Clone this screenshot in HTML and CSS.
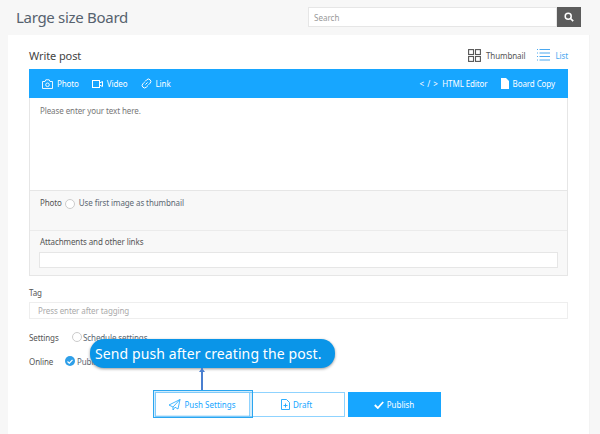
FILE: index.html
```html
<!DOCTYPE html>
<html lang="en">
<head>
<meta charset="utf-8">
<title>Large size Board</title>
<link rel="stylesheet" href="styles.css">
</head>
<body>
<header class="top">
  <h1 class="title">Large size Board</h1>
  <div class="search">
    <input class="search-input" placeholder="Search">
    <button class="search-btn" aria-label="Search">
      <svg width="10" height="10" viewBox="0 0 10 10"><circle cx="4.200" cy="4.200" r="3" fill="none" stroke="#fff" stroke-width="1.500"/><path d="M6.500 6.500L9.200 9.200" stroke="#fff" stroke-width="1.700"/></svg>
    </button>
  </div>
</header>
<main class="card">
  <div class="card-head">
    <h2 class="card-title">Write post</h2>
    <div class="views">
      <span class="view">
        <svg width="13" height="13" viewBox="0 0 13 13" fill="none" stroke="#555" stroke-width="1.100"><rect x=".6" y=".6" width="4.900" height="4.900"/><rect x="7.500" y=".6" width="4.900" height="4.900"/><rect x=".6" y="7.500" width="4.900" height="4.900"/><rect x="7.500" y="7.500" width="4.900" height="4.900"/></svg>
        Thumbnail
      </span>
      <span class="view view-on">
        <svg width="13" height="12" viewBox="0 0 13 12" stroke="#4aa8f0" stroke-width="1"><path d="M0 .5h1M2.500 .5H13M0 4h1M2.500 4H13M0 7.500h1M2.500 7.500H13M0 11h1M2.500 11H13"/></svg>
        List
      </span>
    </div>
  </div>
  <section class="editor">
    <div class="toolbar">
      <div class="tools">
        <span class="tool"><svg width="11" height="10" viewBox="0 0 11 10" fill="none" stroke="#fff" stroke-width=".9"><path d="M.5 2.500h2.500l.8-1.700h3.400l.8 1.700h2.500v7h-10z"/><circle cx="5.500" cy="5.800" r="1.800"/></svg>Photo</span>
        <span class="tool"><svg width="11" height="8" viewBox="0 0 11 8" fill="none" stroke="#fff" stroke-width="1"><rect x=".5" y=".5" width="7" height="7"/><path d="M7.500 3l3-1.500v5l-3-1.500"/></svg>Video</span>
        <span class="tool"><svg width="11" height="11" viewBox="0 0 11 11" fill="none" stroke="#fff" stroke-width="1"><path d="M4.500 6.500l2-2M4 3.500l1.700-1.700a2 2 0 0 1 3.400 3.400L7.500 6.800M7 7.500L5.300 9.200a2 2 0 0 1-3.400-3.400L3.500 4.200"/></svg>Link</span>
      </div>
      <div class="tools">
        <span class="tool"><span class="code">&lt; / &gt;</span>HTML Editor</span>
        <span class="tool"><svg width="8" height="11" viewBox="0 0 8 11" fill="#fff"><path d="M0 0h5l3 3v8H0z"/></svg>Board Copy</span>
      </div>
    </div>
    <div class="write">Please enter your text here.</div>
    <div class="photo-row">
      <span class="dark">Photo</span>
      <span class="radio"></span>
      <span class="slate">Use first image as thumbnail</span>
    </div>
    <div class="attach">
      <div class="dark attach-label">Attachments and other links</div>
      <div class="attach-input"></div>
    </div>
  </section>
  <div class="tag-label">Tag</div>
  <div class="tag-input">Press enter after tagging</div>
  <div class="option settings">
    <span class="opt-label">Settings</span><span class="radio"></span><span class="slate">Schedule settings</span>
  </div>
  <div class="option online">
    <span class="opt-label">Online</span>
    <span class="check"><svg width="6" height="5" viewBox="0 0 6 5" fill="none" stroke="#fff" stroke-width="1.200"><path d="M.5 2.500l1.800 1.700L5.500.8"/></svg></span>
    <span class="slate">Publish</span>
  </div>
  <div class="actions">
    <button class="btn btn-line push">
      <svg width="13" height="12" viewBox="0 0 12 12" fill="none" stroke="#17a6ff" stroke-width=".8"><path d="M.5 6L11.500 .5 9.500 10 6.500 8.200 4.500 11V8L11.500 .5M4.500 8L.5 6"/></svg>
      Push Settings
    </button>
    <button class="btn btn-line draft">
      <svg width="9" height="11" viewBox="0 0 9 11" fill="none" stroke="#17a6ff" stroke-width=".9"><path d="M.5 .5h5l3 3v7h-8zM4.500 4.500v4M2.500 6.500h4"/></svg>
      Draft
    </button>
    <button class="btn btn-fill">
      <svg width="10" height="8" viewBox="0 0 10 8" fill="none" stroke="#fff" stroke-width="1.800"><path d="M.8 4l3 3L9.200 1"/></svg>
      Publish
    </button>
  </div>
</main>
<div class="tip">Send push after creating the post.</div>
<div class="arrow"></div>
<div class="highlight"></div>
</body>
</html>
```
FILE: styles.css
```css
* { box-sizing: border-box; }
html, body { margin: 0; }
body {
  width: 600px; height: 434px; overflow: hidden; position: relative;
  background: #f7f7f7; color: #555;
  font-family: "Noto Sans", sans-serif; font-size: 8px; letter-spacing: -.1px;
}
.top { height: 35px; display: flex; justify-content: space-between; padding: 7px 19px 0 16px; }
.title { margin: 0; font-size: 15px; font-weight: 400; line-height: 20px; color: #56626e; letter-spacing: -.3px; }
.search { display: flex; width: 273px; height: 20px; }
.search-input { flex: 1; min-width: 0; border: 1px solid #e6e6e6; background: #fff; padding: 0 5px; font: inherit; }
.search-input::placeholder { color: #999; }
.search-btn { width: 24px; border: 0; padding: 0; background: #5c5c5c; display: flex; align-items: center; justify-content: center; }
.card { width: 582px; height: 399px; margin-left: 8px; background: #fff; padding: 0 21px; border-right: 1px solid #f3f3f3; }
.card-head { height: 34px; display: flex; justify-content: space-between; align-items: center; padding-top: 6px; }
.card-title { margin: 0; font-size: 11px; font-weight: 400; color: #444; }
.views { display: flex; gap: 12px; }
.view { display: flex; align-items: center; gap: 5px; color: #555; }
.view-on { color: #4aa8f0; }
.editor { border: 1px solid #e6e6e6; border-top: 0; }
.toolbar { height: 29px; margin: 0 -1px; background: #17a6ff; display: flex; justify-content: space-between; align-items: center; padding: 0 13px; color: #fff; }
.tools { display: flex; gap: 13px; }
.tool { display: flex; align-items: center; gap: 4px; }
.code { font-size: 8px; letter-spacing: .5px; }
.write { height: 93px; padding: 7px 10px; color: #777; border-bottom: 1px solid #e6e6e6; }
.photo-row { height: 40px; background: #f8f8f8; padding: 2px 10px 0; display: flex; align-items: flex-start; gap: 2px; border-bottom: 1px solid #ebebeb; line-height: 20px; }
.dark { color: #555; }
.slate { color: #5c6873; }
.radio { width: 10px; height: 10px; margin: 6px 2px 0 1px; border: 1px solid #ccc; border-radius: 50%; background: #fff; flex: none; }
.attach { height: 44px; background: #f8f8f8; padding: 5px 9px 0; }
.attach-label { padding-left: 1px; }
.attach-input { height: 16px; margin-top: 5px; background: #fff; border: 1px solid #e6e6e6; }
.tag-label { margin-top: 11px; line-height: 12px; color: #555; }
.tag-input { height: 17px; margin-top: 3px; border: 1px solid #eee; color: #aaa; padding: 0 8px; line-height: 16px; }
.option { display: flex; align-items: center; height: 14px; }
.settings { margin-top: 11px; }
.online { margin-top: 10px; }
.opt-label { width: 36px; color: #555; }
.settings .opt-label { width: 43px; }
.settings .radio { margin: 0 1px 0 0; }
.check { width: 10px; height: 10px; border-radius: 50%; background: #2e9fe8; margin-right: 2px; display: flex; align-items: center; justify-content: center; }
.actions { display: flex; justify-content: center; margin: 24px 0 0 -2px; }
.btn { height: 25px; font: inherit; letter-spacing: 0; display: flex; align-items: center; justify-content: center; gap: 3px; }
.btn-line { width: 95px; background: #fff; color: #17a6ff; border: 1px solid #8fd3ff; }
.draft { border-left: 0; margin-right: 3px; }
.btn-fill { width: 93px; background: #17a6ff; color: #fff; border: 0; }
.tip {
  position: absolute; left: 90px; top: 339px; width: 245px; height: 29px; padding-left: 5px;
  background: #0a95e8; color: #fff; border-radius: 14px; font-size: 14px; line-height: 29px;
  box-shadow: 0 1px 3px rgba(0,0,0,.4); letter-spacing: .1px; white-space: nowrap;
}
.arrow { position: absolute; left: 201px; top: 368px; width: 2px; height: 22px; background: #4a7fd0; }
.arrow::before { content: ""; position: absolute; left: -2px; top: 0; border: 3px solid transparent; border-top: 0; border-bottom: 4px solid #4a7fd0; }
.highlight { position: absolute; left: 153px; top: 390px; width: 100px; height: 28px; border: 1px solid #2ba6f0; box-shadow: inset 0 0 0 2px rgba(80,180,240,.25); }
```
